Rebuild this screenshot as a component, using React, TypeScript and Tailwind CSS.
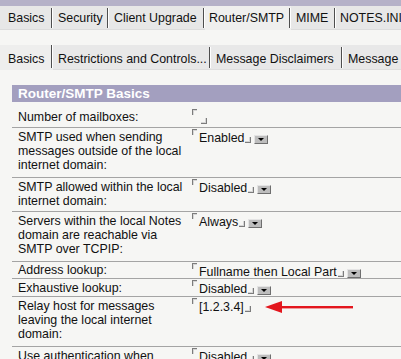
import React from 'react';

const topTabs = [
  { label: 'Basics', w: 'w-[53px]', pl: 'pl-[8px]' },
  { label: 'Security', w: 'w-[56px]', pl: 'pl-[5px]' },
  { label: 'Client Upgrade', w: 'w-[96px]', pl: 'pl-[5px]' },
  { label: 'Router/SMTP', w: 'w-[86px]', pl: 'pl-[4px]', active: true },
  { label: 'MIME', w: 'w-[45px]', pl: 'pl-[5px]' },
  { label: 'NOTES.INI', w: 'w-[80px]', pl: 'pl-[4px]', last: true },
];

const subTabs = [
  { label: 'Basics', w: 'w-[53px]', pl: 'pl-[8px]', active: true },
  { label: 'Restrictions and Controls...', w: 'w-[158px]', pl: 'pl-[5px]' },
  { label: 'Message Disclaimers', w: 'w-[132px]', pl: 'pl-[5px]' },
  { label: 'Message', w: 'w-[70px]', pl: 'pl-[5px]', last: true },
];

// little Notes field delimiters
const FieldStart = () => (
  <span className="block w-[5px] h-[6px] shrink-0 border-l border-t border-[#7c7c7c] shadow-[inset_1px_1px_0_#d6d6d6]" />
);
const FieldEnd = ({ className = '' }: { className?: string }) => (
  <span className={`block w-[6px] h-[6px] shrink-0 border-r border-b border-[#7c7c7c] shadow-[inset_-1px_-1px_0_#d6d6d6] ${className}`} />
);

const Dropdown = () => (
  <span className="ml-[3px] mt-[6px] flex h-[9px] w-[14px] shrink-0 items-center justify-center border border-t-[#e4e4e4] border-l-[#e4e4e4] border-r-[#6e6e6e] border-b-[#6e6e6e] bg-[#bdbdbd]">
    <span className="block h-0 w-0 border-x-[3px] border-t-[3px] border-x-transparent border-t-black" />
  </span>
);

const Value = ({ text, drop = true }: { text: string; drop?: boolean }) => (
  <div className="flex items-start pl-[3px] pt-[1px]">
    <FieldStart />
    <span className="ml-[2px] mt-[2px] whitespace-nowrap leading-[14px]">{text}</span>
    <FieldEnd className="ml-[1px] mt-[8px]" />
    {drop && <Dropdown />}
  </div>
);

const rows: { label: string[]; value: React.ReactNode; h: string; labelPt?: string }[] = [
  {
    label: ['Number of mailboxes:'],
    h: 'h-[26px]',
    labelPt: 'pt-[8px]',
    value: (
      <div className="pl-[3px] pt-[7px]">
        <FieldStart />
        <div className="ml-[9px] mt-[3px]">
          <FieldEnd />
        </div>
      </div>
    ),
  },
  {
    label: ['SMTP used when sending', 'messages outside of the local', 'internet domain:'],
    h: 'h-[50px]',
    value: <Value text="Enabled" />,
  },
  {
    label: ['SMTP allowed within the local', 'internet domain:'],
    h: 'h-[34px]',
    value: <Value text="Disabled" />,
  },
  {
    label: ['Servers within the local Notes', 'domain are reachable via', 'SMTP over TCPIP:'],
    h: 'h-[50px]',
    value: <Value text="Always" />,
  },
  {
    label: ['Address lookup:'],
    h: 'h-[17px]',
    labelPt: 'pt-[1px]',
    value: <Value text="Fullname then Local Part" />,
  },
  {
    label: ['Exhaustive lookup:'],
    h: 'h-[18px]',
    value: <Value text="Disabled" />,
  },
  {
    label: ['Relay host for messages', 'leaving the local internet', 'domain:'],
    h: 'h-[50px]',
    value: <Value text="[1.2.3.4]" drop={false} />,
  },
  {
    label: ['Use authentication when'],
    h: 'h-[50px]',
    value: <Value text="Disabled" />,
  },
];

export default function App() {
  return (
    <div className="relative h-[359px] w-[401px] overflow-hidden bg-[#f6f6f4] font-['Liberation_Sans',Arial,sans-serif] text-[12.4px] text-[#111]">
      {/* window strip */}
      <div className="h-[6px] bg-[#b5b1c8]" />

      {/* main tabs */}
      <div className="flex h-[24px] bg-[#e7e7e7] shadow-[inset_0_-1px_0_#dcdcdc]">
        {topTabs.map((t) => (
          <div key={t.label} className={`flex shrink-0 items-center ${t.w} ${t.active ? 'bg-[#efefee]' : ''}`}>
            <span className={`flex-1 whitespace-nowrap ${t.pl}`}>{t.label}</span>
            {!t.last && <span className="my-[2px] h-[20px] w-[2px] shrink-0 border-l border-[#4e4e4e] bg-white" />}
          </div>
        ))}
      </div>

      <div className="h-[15px]" />

      {/* sub tabs */}
      <div className="flex h-[25px] bg-[#e8e8e8] shadow-[inset_0_-1px_0_#dedede]">
        {subTabs.map((t) => (
          <div key={t.label} className={`flex shrink-0 items-center ${t.w} ${t.active ? 'bg-[#eeeeed]' : ''}`}>
            <span className={`flex-1 whitespace-nowrap pt-[3px] ${t.pl}`}>{t.label}</span>
            {!t.last && (
              <span className={`h-[21px] w-[2px] shrink-0 self-end mb-[2px] border-l border-[#4e4e4e] bg-white ${t.active ? 'h-[23px]' : ''}`} />
            )}
          </div>
        ))}
      </div>

      <div className="h-[15px]" />

      {/* form table */}
      <div className="ml-[12px]">
        <div className="h-[17px] bg-[#a39fbf] pl-[6px] text-[13.5px] font-bold leading-[17px] text-white">
          Router/SMTP Basics
        </div>
        {rows.map((r, i) => (
          <div key={i} className={`flex border-b border-[#a4a4a4] ${r.h}`}>
            <div className={`w-[177px] shrink-0 pl-[6px] leading-[14px] ${r.labelPt ?? 'pt-[2px]'}`}>
              {r.label.map((l) => (
                <div key={l} className="whitespace-nowrap">
                  {l}
                </div>
              ))}
            </div>
            <div className="flex-1">{r.value}</div>
          </div>
        ))}
      </div>

      {/* red arrow pointing at the relay host */}
      <svg className="absolute left-[262px] top-[299px]" width="96" height="16" viewBox="0 0 96 16">
        <polygon points="3,8 20,2 20,14" fill="#e3161d" />
        <rect x="18" y="7" width="73" height="2.4" fill="#e3161d" />
      </svg>
    </div>
  );
}
